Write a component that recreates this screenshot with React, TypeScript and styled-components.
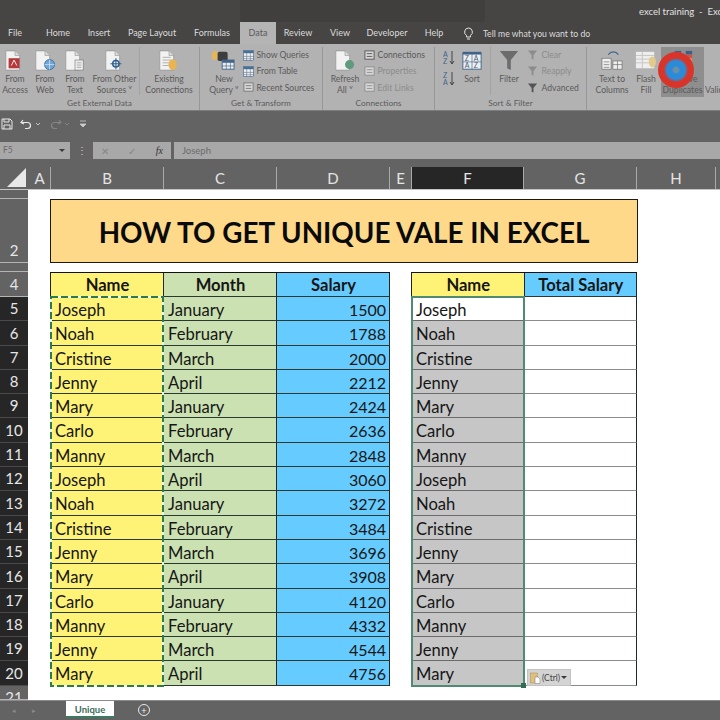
import styled, { createGlobalStyle } from "styled-components";

const GlobalStyle = createGlobalStyle`
  html, body { margin: 0; padding: 0; background: #fff; }
  body { width: 720px; height: 720px; overflow: hidden; font-family: Lato, "Liberation Sans", sans-serif; }
`;

const Page = styled.div`
  position: relative;
  width: 720px;
  height: 720px;
  display: flex;
  flex-direction: column;
  overflow: hidden;
`;

/* title bar + tabs */
const TitleBar = styled.div`
  height: 22px;
  background: #464544;
  display: flex;
  justify-content: space-between;
`;
const TitleShade = styled.div`
  width: 245px;
  margin-left: 240px;
  background: #413f3e;
  border-radius: 0 0 4px 4px;
`;
const TitleText = styled.div`
  color: #e2e2e2;
  font-size: 9.5px;
  line-height: 23px;
  white-space: pre;
  width: 81px;
  overflow: hidden;
`;
const TabBar = styled.div`
  height: 22px;
  background: #464544;
  display: flex;
  align-items: stretch;
`;
const Tab = styled.div<{ $w: number; $active?: boolean }>`
  width: ${(p) => p.$w}px;
  margin-left: ${(p) => (p.$active ? "8px" : "0")};
  text-align: center;
  font-size: 9px;
  line-height: 22px;
  color: ${(p) => (p.$active ? "#5a5a5a" : "#dcdcdc")};
  background: ${(p) => (p.$active ? "#b4b4b4" : "transparent")};
  white-space: nowrap;
`;
const TellMe = styled.div`
  display: flex;
  align-items: center;
  gap: 9px;
  margin-left: 9px;
  color: #dcdcdc;
  font-size: 8.7px;
`;

/* ribbon */
const Ribbon = styled.div`
  height: 66px;
  background: #b2b2b2;
  display: flex;
  overflow: hidden;
`;
const Group = styled.div<{ $w: number; $last?: boolean }>`
  width: ${(p) => p.$w}px;
  flex: none;
  margin-top: 3px;
  border-right: ${(p) => (p.$last ? "none" : "1px solid #979797")};
  box-sizing: border-box;
  display: flex;
  flex-direction: column;
`;
const GroupBody = styled.div`
  flex: 1;
  display: flex;
  align-items: flex-start;
  min-height: 0;
`;
const GroupLabel = styled.div`
  height: 13px;
  text-align: center;
  font-size: 8.3px;
  line-height: 13px;
  color: #5b5b5b;
  white-space: nowrap;
`;
const BigButton = styled.div<{ $w: number; $hot?: boolean }>`
  width: ${(p) => p.$w}px;
  flex: none;
  height: 50px;
  display: flex;
  flex-direction: column;
  align-items: center;
  padding-top: 3px;
  box-sizing: border-box;
  background: ${(p) => (p.$hot ? "#8e8e8e" : "transparent")};
  color: #5a5a5a;
  font-size: 8.6px;
  line-height: 11.3px;
  text-align: center;
  white-space: nowrap;
  svg { flex: none; height: 21px; margin-bottom: 2.5px; }
`;
const ClippedButton = styled(BigButton)`
  overflow: hidden;
  align-items: flex-start;
  padding-left: 1px;
  padding-top: 37.5px;
`;
const ThinRule = styled.div`
  width: 1px;
  height: 48px;
  flex: none;
  background: #a2a2a2;
`;
const SmallColumn = styled.div<{ $w: number }>`
  width: ${(p) => p.$w}px;
  flex: none;
  display: flex;
  flex-direction: column;
  gap: 4.3px;
  padding-top: 2px;
`;
const SmallItem = styled.div<{ $off?: boolean }>`
  height: 12px;
  display: flex;
  align-items: center;
  gap: 2.5px;
  font-size: 8.6px;
  color: ${(p) => (p.$off ? "#8c8c8c" : "#5a5a5a")};
  white-space: nowrap;
`;
const Spacer = styled.div<{ $w: number }>`
  width: ${(p) => p.$w}px;
  flex: none;
`;

/* quick access + formula bar */
const Quick = styled.div`
  height: 31px;
  background: #636363;
  border-top: 1px solid #7d7d7d;
  display: flex;
  align-items: center;
  padding: 0 0 5px 1px;
  gap: 7px;
  box-sizing: border-box;
`;
const FormulaBar = styled.div`
  height: 27px;
  margin-bottom: -1px;
  padding-top: 1px;
  box-sizing: border-box;
  background: #636363;
  display: flex;
  align-items: flex-start;
`;
const NameBox = styled.div`
  width: 70px;
  height: 17px;
  background: #a8a8a8;
  color: #6b6b6b;
  font-size: 8.5px;
  line-height: 17px;
  padding: 0 5px 0 3px;
  box-sizing: border-box;
  display: flex;
  justify-content: space-between;
  align-items: center;
`;
const Caret = styled.span`
  width: 0;
  height: 0;
  border-left: 3px solid transparent;
  border-right: 3px solid transparent;
  border-top: 3px solid #3a3a3a;
`;
const Grip = styled.div`
  width: 23px;
  text-align: center;
  color: #cfcfcf;
  font-size: 10px;
  line-height: 17px;
`;
const FxBox = styled.div`
  width: 78px;
  height: 17px;
  background: #a8a8a8;
  display: flex;
  align-items: center;
  justify-content: space-between;
  padding: 0 8px;
  box-sizing: border-box;
  color: #868686;
  font-size: 10px;
`;
const Fx = styled.i`
  font-family: "Liberation Serif", serif;
  color: #333;
  font-size: 10px;
`;
const FormulaInput = styled.div`
  flex: 1;
  height: 17px;
  margin-left: 3px;
  background: #a8a8a8;
  color: #6b6b6b;
  font-size: 9.5px;
  line-height: 17px;
  padding-left: 8px;
`;

/* column headers */
const ColumnHeaders = styled.div`
  height: 23px;
  background: #636363;
  display: flex;
  border-bottom: 1px solid #c4c4c4;
  box-sizing: border-box;
  flex: none;
`;
const Corner = styled.div`
  width: 29px;
  flex: none;
  display: flex;
  justify-content: flex-end;
  align-items: flex-end;
  padding: 0 3px 2px 0;
  box-sizing: border-box;
`;
const ColHead = styled.div<{ $w: number; $on?: boolean }>`
  width: ${(p) => p.$w}px;
  flex: none;
  box-sizing: border-box;
  text-align: center;
  font-size: 15px;
  line-height: 23px;
  color: #e4e4e4;
  background: ${(p) => (p.$on ? "#262626" : "transparent")};
  border-right: 1px solid #a9a9a9;
`;

/* sheet */
const SheetArea = styled.div`
  height: 510px;
  display: flex;
  flex: none;
  background: #fff;
`;
const RowHeaders = styled.div`
  width: 28px;
  flex: none;
  display: flex;
  flex-direction: column;
  background: #636363;
`;
const RowHead = styled.div<{ $h: number; $on?: boolean; $pad?: number; $top?: boolean }>`
  height: ${(p) => p.$h}px;
  flex: none;
  box-sizing: border-box;
  overflow: hidden;
  background: ${(p) => (p.$on ? "#262626" : "#636363")};
  border-bottom: 1px solid ${(p) => (p.$on ? "#4a4a4a" : "#b5b5b5")};
  color: #e6e6e6;
  font-size: 15px;
  text-align: center;
  display: flex;
  align-items: ${(p) => (p.$top ? "flex-start" : "flex-end")};
  justify-content: center;
  line-height: 23px;
  padding-bottom: ${(p) => p.$pad ?? 0}px;
`;
const Sheet = styled.div`
  position: relative;
  flex: 1;
  padding: 9px 0 0 22px;
`;
const Banner = styled.div`
  width: 588px;
  height: 64px;
  box-sizing: border-box;
  background: #ffd98a;
  border: 1.5px solid #1c1a14;
  padding-top: 2px;
  text-align: center;
  font-weight: 700;
  font-size: 27.8px;
  line-height: 62px;
  color: #0a0a0a;
`;
const Tables = styled.div`
  display: flex;
  gap: 21px;
  margin-top: 9px;
`;
const DataGrid = styled.div<{ $cols: number; $colw: number }>`
  display: grid;
  grid-template-columns: repeat(${(p) => p.$cols}, ${(p) => p.$colw}px);
  grid-template-rows: 24px repeat(16, 24.3px);
  border-top: 1px solid #111;
  border-left: 1px solid #222;
`;
const Cell = styled.div<{ $bg: string; $head?: boolean; $right?: boolean; $line?: string }>`
  background: ${(p) => p.$bg};
  border-right: 1px solid #1d2a2a;
  border-bottom: 1px solid ${(p) => p.$line ?? "#2a3a30"};
  box-sizing: border-box;
  padding: 1px 3px 0 4px;
  font-size: ${(p) => (p.$head ? "16.6px" : p.$right ? "16px" : "16.6px")};
  font-weight: ${(p) => (p.$head ? 700 : 400)};
  text-align: ${(p) => (p.$head ? "center" : p.$right ? "right" : "left")};
  line-height: ${(p) => (p.$head ? "23px" : "24px")};
  color: #161616;
  white-space: nowrap;
`;
const AntsFrame = styled.svg`
  position: absolute;
  left: 22px;
  top: 106px;
`;
const Selection = styled.div`
  position: absolute;
  left: 383px;
  top: 106px;
  width: 114px;
  height: 391px;
  box-sizing: border-box;
  border: 2px solid #4f8a72;
`;
const Handle = styled.div`
  position: absolute;
  right: -3px;
  bottom: -3px;
  width: 5px;
  height: 5px;
  background: #2f6e52;
`;
const PasteTag = styled.div`
  position: absolute;
  left: 499px;
  top: 479px;
  width: 44px;
  height: 17px;
  background: #d4d4d4;
  border: 1px solid #c2c2c2;
  box-sizing: border-box;
  display: flex;
  align-items: center;
  gap: 1px;
  font-size: 8.5px;
  color: #444;
  padding-left: 2px;
`;

/* bottom */
const SheetTabs = styled.div`
  height: 20px;
  background: #636363;
  border-top: 1px solid #8a8a8a;
  box-sizing: border-box;
  display: flex;
  align-items: flex-start;
  flex: none;
`;
const ScrollArrows = styled.div`
  width: 66px;
  display: flex;
  gap: 16px;
  padding: 5px 0 0 12px;
  box-sizing: border-box;
  color: #8a8a8a;
  font-size: 7px;
`;
const SheetTab = styled.div`
  width: 48px;
  height: 15px;
  background: #fff;
  color: #3b6e5a;
  font-weight: 700;
  font-size: 9.5px;
  line-height: 17px;
  text-align: center;
  border-bottom: 2px solid #3b7a5e;
`;
const AddSheet = styled.div`
  width: 10px;
  height: 10px;
  margin: 3px 0 0 24px;
  border: 1px solid #e8e8e8;
  border-radius: 50%;
  color: #e8e8e8;
  font-size: 10px;
  line-height: 10px;
  text-align: center;
`;

/* recording cursor */
const ClickRing = styled.div`
  position: absolute;
  left: 658px;
  top: 52px;
  width: 36px;
  height: 36px;
  border-radius: 50%;
  background: radial-gradient(circle, #6f8ea8 0 10%, #2a8cd8 16% 36%, #d8342a 48% 80%, rgba(216, 52, 42, 0) 100%);
`;

const Doc = ({ children }: { children?: React.ReactNode }) => (
  <svg width="26" height="21" viewBox="0 0 26 23">
    <path d="M3 1h10l5 5v16H3z" fill="#f2f2f2" stroke="#8a8a8a" strokeWidth="0.6" />
    <path d="M13 1v5h5" fill="#ddd" stroke="#8a8a8a" strokeWidth="0.6" />
    {children}
  </svg>
);

const GridIcon = ({ head = "#4a6f96" }: { head?: string }) => (
  <svg width="11" height="11" viewBox="0 0 12 12" style={{ flex: "none" }}>
    <rect x="0.5" y="0.5" width="11" height="11" fill="#eee" stroke="#50708f" strokeWidth="0.7" />
    <rect x="0.5" y="0.5" width="11" height="3" fill={head} />
    <path d="M0 7h12M0 9.5h12M4 3v9M8 3v9" stroke="#50708f" strokeWidth="0.6" />
  </svg>
);

const Sq = ({ c = "#777" }: { c?: string }) => (
  <svg width="11" height="11" viewBox="0 0 12 12" style={{ flex: "none" }}>
    <rect x="1" y="1" width="10" height="9" fill="#d8d8d8" stroke={c} />
    <path d="M3 4h6M3 7h6" stroke={c} />
  </svg>
);

const Funnel = ({ c = "#777" }: { c?: string }) => (
  <svg width="12" height="12" viewBox="0 0 13 12" style={{ flex: "none" }}>
    <path d="M1 1h10L7 6v5L5 10V6z" fill={c} />
  </svg>
);

const DupeBar = ({ x }: { x: number }) => (
  <g>
    <rect x={x} y="1" width="7" height="4" fill="#3f5f8a" />
    <rect x={x} y="5" width="7" height="4" fill="#c9554a" />
    <rect x={x} y="9" width="7" height="4" fill="#e08a58" />
    <rect x={x} y="13" width="7" height="4" fill="#eab878" />
    <rect x={x} y="17" width="7" height="4" fill="#f1dcb0" />
  </g>
);

const SortLetters = ({ top, bottom }: { top: string; bottom: string }) => (
  <svg width="12" height="17" viewBox="0 0 12 17">
    <text x="0" y="8" fontSize="7" fill="#3f6389" fontFamily="Lato">{top}</text>
    <text x="0" y="15" fontSize="7" fill="#3f6389" fontFamily="Lato">{bottom}</text>
    <path d="M9 2v13M7 12l2 3 2-3" stroke="#444" fill="none" />
  </svg>
);

const names = ["Joseph", "Noah", "Cristine", "Jenny", "Mary", "Carlo", "Manny", "Joseph", "Noah", "Cristine", "Jenny", "Mary", "Carlo", "Manny", "Jenny", "Mary"];
const months = ["January", "February", "March", "April", "January", "February", "March", "April", "January", "February", "March", "April", "January", "February", "March", "April"];
const salary = [1500, 1788, 2000, 2212, 2424, 2636, 2848, 3060, 3272, 3484, 3696, 3908, 4120, 4332, 4544, 4756];

const tabs: [string, number][] = [
  ["File", 30], ["Home", 56], ["Insert", 26], ["Page Layout", 80], ["Formulas", 40],
  ["Data", 36], ["Review", 44], ["View", 40], ["Developer", 54], ["Help", 40],
];
const cols: [string, number, boolean?][] = [
  ["A", 22], ["B", 113], ["C", 113], ["D", 113], ["E", 22], ["F", 112, true], ["G", 113], ["H", 79], ["", 30],
];

const YELLOW = "#fff377";
const GREEN = "#cbe1b1";
const BLUE = "#66ccff";
const GREY = "#c6c6c6";

export default function App() {
  return (
    <Page>
      <GlobalStyle />
      <TitleBar>
        <TitleShade />
        <TitleText>excel training  -  Excel</TitleText>
      </TitleBar>
      <TabBar>
        {tabs.map(([t, w]) => (
          <Tab key={t} $w={w} $active={t === "Data"}>{t}</Tab>
        ))}
        <TellMe>
          <svg width="11" height="13" viewBox="0 0 11 13">
            <path d="M5.5 1a4 4 0 0 0-2 7.4V10h4V8.4a4 4 0 0 0-2-7.4zM4 12h3" fill="none" stroke="#e4e4e4" strokeWidth="1" />
          </svg>
          Tell me what you want to do
        </TellMe>
      </TabBar>

      <Ribbon>
        <Group $w={200}>
          <GroupBody>
            <BigButton $w={30}>
              <Doc><rect x="6" y="9" width="12" height="11" fill="#b5373a" /><path d="M9 17l3-6 3 6" stroke="#fff" fill="none" /></Doc>
              <span>From<br />Access</span>
            </BigButton>
            <BigButton $w={30}>
              <Doc><circle cx="18" cy="16" r="5.5" fill="#6fa6d6" stroke="#3d6f9e" /><path d="M12.5 16h11M18 10.5v11" stroke="#dfeefa" strokeWidth="0.7" /></Doc>
              <span>From<br />Web</span>
            </BigButton>
            <BigButton $w={30}>
              <Doc><rect x="13" y="11" width="9" height="11" fill="#eee" stroke="#777" strokeWidth="0.7" /><path d="M15 14h5M15 16.5h5M15 19h5" stroke="#888" strokeWidth="0.7" /></Doc>
              <span>From<br />Text</span>
            </BigButton>
            <BigButton $w={49}>
              <Doc><circle cx="14" cy="15" r="3.5" fill="none" stroke="#2f5f8f" strokeWidth="1.6" /><path d="M14 9v12M8 15h12" stroke="#2f5f8f" strokeWidth="1.2" /></Doc>
              <span>From Other<br />Sources ˅</span>
            </BigButton>
            <ThinRule />
            <BigButton $w={58}>
              <Doc><path d="M6 8h9M6 11h10M6 14h7M6 17h7" stroke="#999" strokeWidth="0.8" /><ellipse cx="17" cy="16" rx="4.5" ry="6" fill="#e8b552" /></Doc>
              <span>Existing<br />Connections</span>
            </BigButton>
          </GroupBody>
          <GroupLabel>Get External Data</GroupLabel>
        </Group>

        <Group $w={123}>
          <GroupBody>
            <Spacer $w={7} />
            <BigButton $w={34}>
              <svg width="28" height="21" viewBox="0 0 28 23">
                <ellipse cx="4" cy="6" rx="3.5" ry="5" fill="#e3b65a" />
                <rect x="7" y="2" width="11" height="10" rx="2" fill="#3d3d3d" />
                <rect x="12" y="11" width="13" height="10" fill="#eee" stroke="#3f6389" />
                <rect x="12" y="11" width="13" height="3" fill="#3f6389" />
                <path d="M12 17.5h13M16.5 14v7M21 14v7" stroke="#3f6389" strokeWidth="0.7" />
              </svg>
              <span>New<br />Query ˅</span>
            </BigButton>
            <Spacer $w={2} />
            <SmallColumn $w={78}>
              <SmallItem><GridIcon />Show Queries</SmallItem>
              <SmallItem><GridIcon />From Table</SmallItem>
              <SmallItem><Sq />Recent Sources</SmallItem>
            </SmallColumn>
          </GroupBody>
          <GroupLabel>Get &amp; Transform</GroupLabel>
        </Group>

        <Group $w={112}>
          <GroupBody>
            <Spacer $w={7} />
            <BigButton $w={30}>
              <Doc><circle cx="18" cy="16" r="5" fill="#5f9a7d" /></Doc>
              <span>Refresh<br />All ˅</span>
            </BigButton>
            <Spacer $w={4} />
            <SmallColumn $w={68}>
              <SmallItem><Sq c="#555" />Connections</SmallItem>
              <SmallItem $off><Sq c="#8c8c8c" />Properties</SmallItem>
              <SmallItem $off><Sq c="#8c8c8c" />Edit Links</SmallItem>
            </SmallColumn>
          </GroupBody>
          <GroupLabel>Connections</GroupLabel>
        </Group>

        <Group $w={152}>
          <GroupBody>
            <Spacer $w={8} />
            <SmallColumn $w={14}>
              <SortLetters top="A" bottom="Z" />
              <SortLetters top="Z" bottom="A" />
            </SmallColumn>
            <BigButton $w={30}>
              <svg width="22" height="21" viewBox="0 0 22 23">
                <rect x="1" y="3" width="20" height="18" fill="#eee" stroke="#3f6389" />
                <rect x="1" y="2" width="20" height="3" fill="#3f6389" />
                <path d="M11 5v16M1 13h20" stroke="#3f6389" strokeWidth="0.7" />
                <text x="3" y="12" fontSize="7.5" fill="#3f6389" fontFamily="Lato">Z</text>
                <text x="13" y="12" fontSize="7.5" fill="#3f6389" fontFamily="Lato">A</text>
                <text x="3" y="20" fontSize="7.5" fill="#3f6389" fontFamily="Lato">A</text>
                <text x="13" y="20" fontSize="7.5" fill="#3f6389" fontFamily="Lato">Z</text>
              </svg>
              <span>Sort</span>
            </BigButton>
            <Spacer $w={3} />
            <ThinRule />
            <BigButton $w={36}>
              <svg width="22" height="21" viewBox="0 0 22 23"><path d="M1 1h20l-8 10v11l-4-2v-9z" fill="#6c6c6c" /></svg>
              <span>Filter</span>
            </BigButton>
            <SmallColumn $w={59}>
              <SmallItem $off><Funnel c="#8c8c8c" />Clear</SmallItem>
              <SmallItem $off><Funnel c="#8c8c8c" />Reapply</SmallItem>
              <SmallItem><Funnel c="#555" />Advanced</SmallItem>
            </SmallColumn>
          </GroupBody>
          <GroupLabel>Sort &amp; Filter</GroupLabel>
        </Group>

        <Group $w={133} $last>
          <GroupBody>
            <Spacer $w={7} />
            <BigButton $w={36}>
              <svg width="24" height="21" viewBox="0 0 24 23">
                <path d="M8 5c3-4 8-4 11 0" stroke="#3f6389" strokeWidth="1.4" fill="none" />
                <rect x="1" y="9" width="10" height="12" fill="#eee" stroke="#666" strokeWidth="0.7" />
                <rect x="13" y="12" width="10" height="9" fill="#eee" stroke="#666" strokeWidth="0.7" />
                <path d="M3 13h6M3 16h6M3 19h6M18 12v9M13 16h10" stroke="#666" strokeWidth="0.7" />
              </svg>
              <span>Text to<br />Columns</span>
            </BigButton>
            <Spacer $w={1} />
            <BigButton $w={30}>
              <svg width="24" height="21" viewBox="0 0 24 23">
                <rect x="1" y="2" width="20" height="18" fill="#eee" />
                <path d="M1 6h20M1 10h20M1 14h20M8 2v18" stroke="#c4c4c4" />
                <ellipse cx="19" cy="13" rx="4" ry="6" fill="#e3c98a" />
              </svg>
              <span>Flash<br />Fill</span>
            </BigButton>
            <BigButton $w={43} $hot>
              <svg width="28" height="21" viewBox="0 0 28 23">
                <DupeBar x={5} />
                <DupeBar x={17} />
              </svg>
              <span>Remove<br />Duplicates</span>
            </BigButton>
            <ClippedButton $w={16}>Valid</ClippedButton>
          </GroupBody>
        </Group>
      </Ribbon>

      <Quick>
        <svg width="12" height="12" viewBox="0 0 12 12"><path d="M1 1h8l2 2v8H1z" fill="none" stroke="#e8e8e8" /><path d="M3 1v3h5V1M3 11V7h6v4" fill="none" stroke="#e8e8e8" /></svg>
        <svg width="22" height="12" viewBox="0 0 22 12"><path d="M3 2L1 4.5 4 6M1.5 4.5h6a3 3 0 0 1 0 6H5" fill="none" stroke="#e8e8e8" strokeWidth="1.2" /><path d="M16 5l2 2 2-2" fill="none" stroke="#c4c4c4" /></svg>
        <svg width="22" height="12" viewBox="0 0 22 12"><path d="M10 2l2 2.500-3 1.500M11.500 4.500h-6a3 3 0 0 0 0 6H8" fill="none" stroke="#858585" strokeWidth="1.2" /><path d="M16 5l2 2 2-2" fill="none" stroke="#858585" /></svg>
        <svg width="10" height="12" viewBox="0 0 10 12"><path d="M2 3h6M2 6h6l-3 3z" fill="#ccc" stroke="#ccc" strokeWidth="0.8" /></svg>
      </Quick>

      <FormulaBar>
        <NameBox>F5<Caret /></NameBox>
        <Grip>⋮</Grip>
        <FxBox><span>✕</span><span>✓</span><Fx>fx</Fx></FxBox>
        <FormulaInput>Joseph</FormulaInput>
      </FormulaBar>

      <ColumnHeaders>
        <Corner>
          <svg width="19" height="19" viewBox="0 0 19 19"><path d="M19 0v19H0z" fill="#e8e8e8" /></svg>
        </Corner>
        {cols.map(([c, w, on]) => (
          <ColHead key={c + w} $w={w} $on={on}>{c}</ColHead>
        ))}
      </ColumnHeaders>

      <SheetArea>
        <RowHeaders>
          <RowHead $h={9} $pad={3}>1</RowHead>
          <RowHead $h={64}>2</RowHead>
          <RowHead $h={9} $pad={3}>3</RowHead>
          <RowHead $h={25}>4</RowHead>
          {salary.map((_, i) => (
            <RowHead key={i} $h={24.3} $on>{i + 5}</RowHead>
          ))}
          <RowHead $h={14} $top>21</RowHead>
        </RowHeaders>
        <Sheet>
          <Banner>HOW TO GET UNIQUE VALE IN EXCEL</Banner>
          <Tables>
            <DataGrid $cols={3} $colw={113}>
              <Cell $bg={YELLOW} $head>Name</Cell>
              <Cell $bg={GREEN} $head>Month</Cell>
              <Cell $bg={BLUE} $head>Salary</Cell>
              {names.map((n, i) => [
                <Cell key={"n" + i} $bg={YELLOW}>{n}</Cell>,
                <Cell key={"m" + i} $bg={GREEN}>{months[i]}</Cell>,
                <Cell key={"s" + i} $bg={BLUE} $right>{salary[i]}</Cell>,
              ])}
            </DataGrid>
            <DataGrid $cols={2} $colw={112.5}>
              <Cell $bg={YELLOW} $head>Name</Cell>
              <Cell $bg={BLUE} $head>Total Salary</Cell>
              {names.map((n, i) => [
                <Cell key={"f" + i} $bg={i === 0 ? "#fff" : GREY} $line="#6a6a6a">{n}</Cell>,
                <Cell key={"g" + i} $bg="#fff" $line="#8c8c8c">{""}</Cell>,
              ])}
            </DataGrid>
          </Tables>
          <AntsFrame width="114" height="391" viewBox="0 0 114 391">
            <rect x="1" y="1" width="112" height="389" fill="none" stroke="#eef7e8" strokeWidth="2" />
            <rect x="1" y="1" width="112" height="389" fill="none" stroke="#2f7a4c" strokeWidth="2" strokeDasharray="7 3" />
          </AntsFrame>
          <Selection><Handle /></Selection>
          <PasteTag>
            <svg width="11" height="13" viewBox="0 0 11 13">
              <rect x="0.5" y="2" width="7" height="10" fill="#e2bf7e" stroke="#a88a50" strokeWidth="0.5" />
              <path d="M5 6h3l2 2v4.500H5z" fill="#fff" stroke="#777" strokeWidth="0.5" />
            </svg>
            (Ctrl)<Caret />
          </PasteTag>
        </Sheet>
      </SheetArea>

      <SheetTabs>
        <ScrollArrows><span>◂</span><span>▸</span></ScrollArrows>
        <SheetTab>Unique</SheetTab>
        <AddSheet>+</AddSheet>
      </SheetTabs>
      <ClickRing />
    </Page>
  );
}
